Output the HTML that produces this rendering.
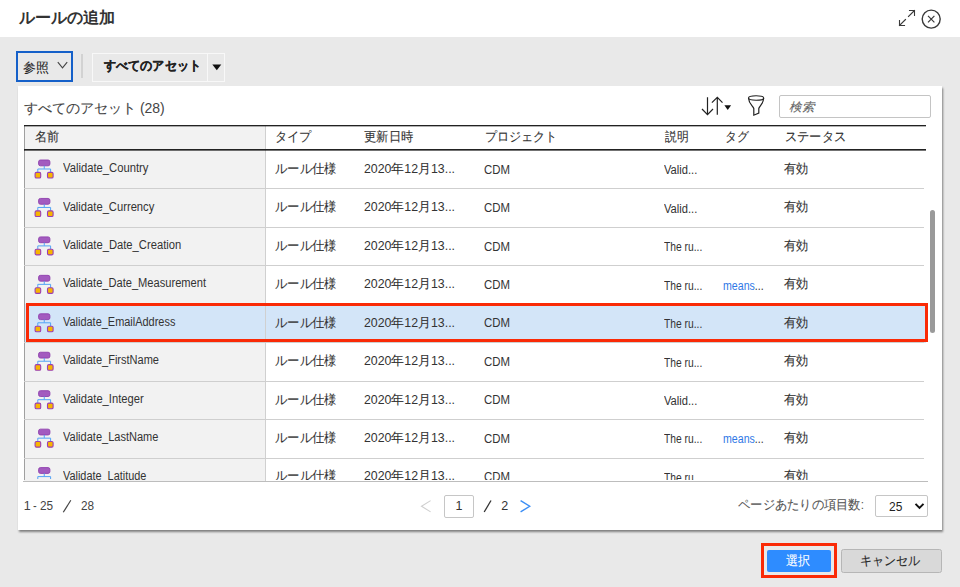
<!DOCTYPE html><html><head><meta charset="utf-8"><style>*{margin:0;padding:0;box-sizing:border-box}
html,body{width:960px;height:587px;overflow:hidden}
body{background:#e9e9e9;font-family:"Liberation Sans",sans-serif;position:relative}
.a{position:absolute}
.t{position:absolute;white-space:nowrap}
.clip{position:absolute;left:0;top:0;width:960px;height:480px;overflow:hidden}
.j{-webkit-text-stroke:0.1px currentColor}
</style></head><body>
<div class="a" style="left:0;top:0;width:960px;height:37px;background:#fff"></div>
<svg class="a" style="left:0;top:0" width="960" height="37">
  <g stroke="#3a3a3a" stroke-width="1.1" fill="none" stroke-linecap="square">
    <path d="M899.5 25.5 L905.5 19.5 M908.5 16.5 L914.5 10.5 M909.5 10.5 H914.5 V15.5 M899.5 20.5 V25.5 H904.5"/>
    <circle cx="931.2" cy="19.1" r="9" stroke-width="1.4"/>
    <path d="M928 15.9 L934.4 22.3 M934.4 15.9 L928 22.3" stroke-width="1.2" stroke-linecap="butt"/>
  </g>
</svg>
<!-- toolbar -->
<div class="a" style="left:16px;top:51px;width:57px;height:31px;border:2px solid #1560c9"></div>
<svg class="a" style="left:0;top:40px" width="240" height="45">
  <path d="M57.8 22.2 L62.5 27.8 L67.2 22.2" stroke="#444" stroke-width="1.1" fill="none"/>
  <path d="M212.3 24.5 H221.3 L216.8 30.3 Z" fill="#111"/>
</svg>
<div class="a" style="left:81px;top:54px;width:1.5px;height:24px;background:#d2d2d2"></div>
<div class="a" style="left:92px;top:53px;width:133px;height:29px;border:1px solid #f8f8f8"></div>
<div class="a" style="left:207px;top:54px;width:1px;height:27px;background:#f8f8f8"></div>
<!-- panel -->
<div class="a" style="left:18px;top:86px;width:924px;height:444px;background:#fff;box-shadow:1px 1.5px 2px rgba(0,0,0,.45)"></div>
<svg class="a" style="left:690px;top:85px" width="100" height="40">
  <g stroke="#222" stroke-width="1.2" fill="none">
    <path d="M17.5 12.3 V29.7 M12 24 L17.5 29.7 L23 24"/>
    <path d="M27.3 12.3 V29.7 M21.9 17.7 L27.3 12.3 L32.5 17.7"/>
    <ellipse cx="66.1" cy="13" rx="7.6" ry="2.2" stroke-width="1.1"/>
    <path d="M58.5 13 C58.8 19 63 21 63.8 23.5 V30.2 L68.8 28 V23.5 C69.6 21 73.4 19 73.7 13"/>
  </g>
  <path d="M34.4 20.3 H41.1 L37.75 25 Z" fill="#111"/>
</svg>
<div class="a" style="left:778.5px;top:95px;width:152px;height:22.5px;border:1px solid #c4c4c4;border-radius:2px"></div>
<!-- table -->
<div class="a" style="left:24px;top:125px;width:241px;height:356px;background:#f2f2f2"></div>
<div class="a" style="left:24px;top:304px;width:902px;height:38.5px;background:#d3e5f8"></div>
<div class="a" style="left:24px;top:125px;width:1px;height:355px;background:#a0a0a0"></div>
<div class="a" style="left:265px;top:125px;width:1px;height:356px;background:#d0d0d0"></div>
<div class="a" style="left:24px;top:125px;width:902px;height:1px;background:#222;box-shadow:0 1px 0 rgba(0,0,0,.3)"></div>
<div class="a" style="left:24px;top:149px;width:902px;height:1px;background:#222;box-shadow:0 1px 0 rgba(0,0,0,.55)"></div>
<div class="a" style="left:24px;top:188px;width:900px;height:1px;background:#cfcfcf"></div>
<div class="a" style="left:24px;top:226.5px;width:900px;height:1px;background:#cfcfcf"></div>
<div class="a" style="left:24px;top:265px;width:900px;height:1px;background:#cfcfcf"></div>
<div class="a" style="left:24px;top:342px;width:900px;height:1px;background:#cfcfcf"></div>
<div class="a" style="left:24px;top:380.5px;width:900px;height:1px;background:#cfcfcf"></div>
<div class="a" style="left:24px;top:419px;width:900px;height:1px;background:#cfcfcf"></div>
<div class="a" style="left:24px;top:457.5px;width:900px;height:1px;background:#cfcfcf"></div>
<div class="a" style="left:23px;top:481px;width:905px;height:1px;background:#bdbdbd"></div>
<div class="a" style="left:25.5px;top:303px;width:902.2px;height:38.6px;border:3px solid #fa2a06"></div>
<div class="a" style="left:929.6px;top:210px;width:5px;height:123px;background:#9a9a9a;border-radius:3px"></div>
<svg class="a" style="left:0;top:0" width="960" height="479"><g transform="translate(0 157.80)">
<rect x="38.6" y="2.2" width="11.3" height="5.8" rx="1.8" fill="#a35bbf" stroke="#8e3fae" stroke-width="0.9"/>
<path d="M44.25 8 V11 M37.8 14.5 V11.2 H50.6 V14.5" stroke="#52a3f5" stroke-width="1" fill="none"/>
<rect x="35.1" y="14.6" width="5.6" height="5.6" rx="1.3" fill="#f7b500" stroke="#9b3fb4" stroke-width="1.1"/>
<rect x="47.5" y="14.6" width="5.6" height="5.6" rx="1.3" fill="#f7b500" stroke="#9b3fb4" stroke-width="1.1"/>
</g>
<g transform="translate(0 196.25)">
<rect x="38.6" y="2.2" width="11.3" height="5.8" rx="1.8" fill="#a35bbf" stroke="#8e3fae" stroke-width="0.9"/>
<path d="M44.25 8 V11 M37.8 14.5 V11.2 H50.6 V14.5" stroke="#52a3f5" stroke-width="1" fill="none"/>
<rect x="35.1" y="14.6" width="5.6" height="5.6" rx="1.3" fill="#f7b500" stroke="#9b3fb4" stroke-width="1.1"/>
<rect x="47.5" y="14.6" width="5.6" height="5.6" rx="1.3" fill="#f7b500" stroke="#9b3fb4" stroke-width="1.1"/>
</g>
<g transform="translate(0 234.70)">
<rect x="38.6" y="2.2" width="11.3" height="5.8" rx="1.8" fill="#a35bbf" stroke="#8e3fae" stroke-width="0.9"/>
<path d="M44.25 8 V11 M37.8 14.5 V11.2 H50.6 V14.5" stroke="#52a3f5" stroke-width="1" fill="none"/>
<rect x="35.1" y="14.6" width="5.6" height="5.6" rx="1.3" fill="#f7b500" stroke="#9b3fb4" stroke-width="1.1"/>
<rect x="47.5" y="14.6" width="5.6" height="5.6" rx="1.3" fill="#f7b500" stroke="#9b3fb4" stroke-width="1.1"/>
</g>
<g transform="translate(0 273.15)">
<rect x="38.6" y="2.2" width="11.3" height="5.8" rx="1.8" fill="#a35bbf" stroke="#8e3fae" stroke-width="0.9"/>
<path d="M44.25 8 V11 M37.8 14.5 V11.2 H50.6 V14.5" stroke="#52a3f5" stroke-width="1" fill="none"/>
<rect x="35.1" y="14.6" width="5.6" height="5.6" rx="1.3" fill="#f7b500" stroke="#9b3fb4" stroke-width="1.1"/>
<rect x="47.5" y="14.6" width="5.6" height="5.6" rx="1.3" fill="#f7b500" stroke="#9b3fb4" stroke-width="1.1"/>
</g>
<g transform="translate(0 311.60)">
<rect x="38.6" y="2.2" width="11.3" height="5.8" rx="1.8" fill="#a35bbf" stroke="#8e3fae" stroke-width="0.9"/>
<path d="M44.25 8 V11 M37.8 14.5 V11.2 H50.6 V14.5" stroke="#52a3f5" stroke-width="1" fill="none"/>
<rect x="35.1" y="14.6" width="5.6" height="5.6" rx="1.3" fill="#f7b500" stroke="#9b3fb4" stroke-width="1.1"/>
<rect x="47.5" y="14.6" width="5.6" height="5.6" rx="1.3" fill="#f7b500" stroke="#9b3fb4" stroke-width="1.1"/>
</g>
<g transform="translate(0 350.05)">
<rect x="38.6" y="2.2" width="11.3" height="5.8" rx="1.8" fill="#a35bbf" stroke="#8e3fae" stroke-width="0.9"/>
<path d="M44.25 8 V11 M37.8 14.5 V11.2 H50.6 V14.5" stroke="#52a3f5" stroke-width="1" fill="none"/>
<rect x="35.1" y="14.6" width="5.6" height="5.6" rx="1.3" fill="#f7b500" stroke="#9b3fb4" stroke-width="1.1"/>
<rect x="47.5" y="14.6" width="5.6" height="5.6" rx="1.3" fill="#f7b500" stroke="#9b3fb4" stroke-width="1.1"/>
</g>
<g transform="translate(0 388.50)">
<rect x="38.6" y="2.2" width="11.3" height="5.8" rx="1.8" fill="#a35bbf" stroke="#8e3fae" stroke-width="0.9"/>
<path d="M44.25 8 V11 M37.8 14.5 V11.2 H50.6 V14.5" stroke="#52a3f5" stroke-width="1" fill="none"/>
<rect x="35.1" y="14.6" width="5.6" height="5.6" rx="1.3" fill="#f7b500" stroke="#9b3fb4" stroke-width="1.1"/>
<rect x="47.5" y="14.6" width="5.6" height="5.6" rx="1.3" fill="#f7b500" stroke="#9b3fb4" stroke-width="1.1"/>
</g>
<g transform="translate(0 426.95)">
<rect x="38.6" y="2.2" width="11.3" height="5.8" rx="1.8" fill="#a35bbf" stroke="#8e3fae" stroke-width="0.9"/>
<path d="M44.25 8 V11 M37.8 14.5 V11.2 H50.6 V14.5" stroke="#52a3f5" stroke-width="1" fill="none"/>
<rect x="35.1" y="14.6" width="5.6" height="5.6" rx="1.3" fill="#f7b500" stroke="#9b3fb4" stroke-width="1.1"/>
<rect x="47.5" y="14.6" width="5.6" height="5.6" rx="1.3" fill="#f7b500" stroke="#9b3fb4" stroke-width="1.1"/>
</g>
<g transform="translate(0 465.40)">
<rect x="38.6" y="2.2" width="11.3" height="5.8" rx="1.8" fill="#a35bbf" stroke="#8e3fae" stroke-width="0.9"/>
<path d="M44.25 8 V11 M37.8 14.5 V11.2 H50.6 V14.5" stroke="#52a3f5" stroke-width="1" fill="none"/>
<rect x="35.1" y="14.6" width="5.6" height="5.6" rx="1.3" fill="#f7b500" stroke="#9b3fb4" stroke-width="1.1"/>
<rect x="47.5" y="14.6" width="5.6" height="5.6" rx="1.3" fill="#f7b500" stroke="#9b3fb4" stroke-width="1.1"/>
</g></svg>
<!-- footer -->
<svg class="a" style="left:0;top:490px" width="120" height="30"><path d="M70.8 10.3 L63.3 22.3" stroke="#444" stroke-width="1.2" fill="none"/></svg>
<svg class="a" style="left:400px;top:490px" width="140" height="30">
  <path d="M30.6 10.6 L21.5 16.25 L30.6 21.9" stroke="#cfcfcf" stroke-width="1.1" fill="none"/>
  <path d="M91 10.5 L84.2 22" stroke="#333" stroke-width="1.3" fill="none"/>
  <path d="M120.6 10.6 L129.7 16.25 L120.6 21.9" stroke="#3b8ef5" stroke-width="1.4" fill="none"/>
</svg>
<div class="a" style="left:443.5px;top:494.75px;width:30.25px;height:22.75px;border:1px solid #c6c6c6;border-radius:2px"></div>
<div class="a" style="left:874.5px;top:495.2px;width:53.3px;height:22.3px;border:1px solid #c6c6c6;border-radius:2px"></div>
<svg class="a" style="left:900px;top:490px" width="40" height="30">
  <path d="M15.5 13.9 L19.5 17.9 L23.5 13.9" stroke="#111" stroke-width="2" fill="none"/>
</svg>
<div class="a" style="left:761.4px;top:542.7px;width:76px;height:35.6px;border:3px solid #fa2a06"></div>
<div class="a" style="left:766.8px;top:549.7px;width:64.2px;height:22.5px;background:#2e8cff;border-radius:2px"></div>
<div class="a" style="left:840.8px;top:549.2px;width:101.3px;height:23.4px;background:#d9d9d9;border:1.5px solid #b6b6b6;border-radius:2.5px"></div>

<div class="clip"><div id="t12" class="t" style="left:63.3px;top:162.10px;font-size:12px;line-height:12px;font-weight:normal;color:#333;font-style:normal;transform:scaleX(0.9367);transform-origin:0 50%;">Validate_Country</div><div id="t13" class="t" style="left:275px;top:162.85px;font-size:12.5px;line-height:12.5px;font-weight:normal;color:#333;font-style:normal;transform:scaleX(0.9492);transform-origin:0 50%;"><span class="j">ルール仕様</span></div><div id="t14" class="t" style="left:364px;top:162.85px;font-size:12.5px;line-height:12.5px;font-weight:normal;color:#333;font-style:normal;transform:scaleX(0.9886);transform-origin:0 50%;">2020<span class="j">年</span>12<span class="j">月</span>13...</div><div id="t15" class="t" style="left:484px;top:163.60px;font-size:12px;line-height:12px;font-weight:normal;color:#333;font-style:normal;transform:scaleX(0.9514);transform-origin:0 50%;">CDM</div><div id="t16" class="t" style="left:664px;top:164.30px;font-size:12px;line-height:12px;font-weight:normal;color:#333;font-style:normal;transform:scaleX(0.9302);transform-origin:0 50%;">Valid...</div><div id="t17" class="t" style="left:784px;top:162.85px;font-size:12.5px;line-height:12.5px;font-weight:normal;color:#333;font-style:normal;transform:scaleX(0.9346);transform-origin:0 50%;"><span class="j">有効</span></div><div id="t18" class="t" style="left:63.3px;top:200.55px;font-size:12px;line-height:12px;font-weight:normal;color:#333;font-style:normal;transform:scaleX(0.9333);transform-origin:0 50%;">Validate_Currency</div><div id="t19" class="t" style="left:275px;top:201.30px;font-size:12.5px;line-height:12.5px;font-weight:normal;color:#333;font-style:normal;transform:scaleX(0.9492);transform-origin:0 50%;"><span class="j">ルール仕様</span></div><div id="t20" class="t" style="left:364px;top:201.30px;font-size:12.5px;line-height:12.5px;font-weight:normal;color:#333;font-style:normal;transform:scaleX(0.9886);transform-origin:0 50%;">2020<span class="j">年</span>12<span class="j">月</span>13...</div><div id="t21" class="t" style="left:484px;top:202.05px;font-size:12px;line-height:12px;font-weight:normal;color:#333;font-style:normal;transform:scaleX(0.9514);transform-origin:0 50%;">CDM</div><div id="t22" class="t" style="left:664px;top:202.75px;font-size:12px;line-height:12px;font-weight:normal;color:#333;font-style:normal;transform:scaleX(0.9302);transform-origin:0 50%;">Valid...</div><div id="t23" class="t" style="left:784px;top:201.30px;font-size:12.5px;line-height:12.5px;font-weight:normal;color:#333;font-style:normal;transform:scaleX(0.9346);transform-origin:0 50%;"><span class="j">有効</span></div><div id="t24" class="t" style="left:63.3px;top:239.00px;font-size:12px;line-height:12px;font-weight:normal;color:#333;font-style:normal;transform:scaleX(0.9342);transform-origin:0 50%;">Validate_Date_Creation</div><div id="t25" class="t" style="left:275px;top:239.75px;font-size:12.5px;line-height:12.5px;font-weight:normal;color:#333;font-style:normal;transform:scaleX(0.9492);transform-origin:0 50%;"><span class="j">ルール仕様</span></div><div id="t26" class="t" style="left:364px;top:239.75px;font-size:12.5px;line-height:12.5px;font-weight:normal;color:#333;font-style:normal;transform:scaleX(0.9886);transform-origin:0 50%;">2020<span class="j">年</span>12<span class="j">月</span>13...</div><div id="t27" class="t" style="left:484px;top:240.50px;font-size:12px;line-height:12px;font-weight:normal;color:#333;font-style:normal;transform:scaleX(0.9514);transform-origin:0 50%;">CDM</div><div id="t28" class="t" style="left:664px;top:241.20px;font-size:12px;line-height:12px;font-weight:normal;color:#333;font-style:normal;transform:scaleX(0.8571);transform-origin:0 50%;">The ru...</div><div id="t29" class="t" style="left:784px;top:239.75px;font-size:12.5px;line-height:12.5px;font-weight:normal;color:#333;font-style:normal;transform:scaleX(0.9346);transform-origin:0 50%;"><span class="j">有効</span></div><div id="t30" class="t" style="left:63.3px;top:277.45px;font-size:12px;line-height:12px;font-weight:normal;color:#333;font-style:normal;transform:scaleX(0.9253);transform-origin:0 50%;">Validate_Date_Measurement</div><div id="t31" class="t" style="left:275px;top:278.20px;font-size:12.5px;line-height:12.5px;font-weight:normal;color:#333;font-style:normal;transform:scaleX(0.9492);transform-origin:0 50%;"><span class="j">ルール仕様</span></div><div id="t32" class="t" style="left:364px;top:278.20px;font-size:12.5px;line-height:12.5px;font-weight:normal;color:#333;font-style:normal;transform:scaleX(0.9886);transform-origin:0 50%;">2020<span class="j">年</span>12<span class="j">月</span>13...</div><div id="t33" class="t" style="left:484px;top:278.95px;font-size:12px;line-height:12px;font-weight:normal;color:#333;font-style:normal;transform:scaleX(0.9514);transform-origin:0 50%;">CDM</div><div id="t34" class="t" style="left:664px;top:279.65px;font-size:12px;line-height:12px;font-weight:normal;color:#333;font-style:normal;transform:scaleX(0.8571);transform-origin:0 50%;">The ru...</div><div id="t35" class="t" style="left:723.3px;top:279.65px;font-size:12px;line-height:12px;font-weight:normal;color:#333;font-style:normal;transform:scaleX(0.8839);transform-origin:0 50%;"><span style="color:#2f78e6">means</span>...</div><div id="t36" class="t" style="left:784px;top:278.20px;font-size:12.5px;line-height:12.5px;font-weight:normal;color:#333;font-style:normal;transform:scaleX(0.9346);transform-origin:0 50%;"><span class="j">有効</span></div><div id="t37" class="t" style="left:63.3px;top:315.90px;font-size:12px;line-height:12px;font-weight:normal;color:#333;font-style:normal;transform:scaleX(0.9124);transform-origin:0 50%;">Validate_EmailAddress</div><div id="t38" class="t" style="left:275px;top:316.65px;font-size:12.5px;line-height:12.5px;font-weight:normal;color:#333;font-style:normal;transform:scaleX(0.9492);transform-origin:0 50%;"><span class="j">ルール仕様</span></div><div id="t39" class="t" style="left:364px;top:316.65px;font-size:12.5px;line-height:12.5px;font-weight:normal;color:#333;font-style:normal;transform:scaleX(0.9886);transform-origin:0 50%;">2020<span class="j">年</span>12<span class="j">月</span>13...</div><div id="t40" class="t" style="left:484px;top:317.40px;font-size:12px;line-height:12px;font-weight:normal;color:#333;font-style:normal;transform:scaleX(0.9514);transform-origin:0 50%;">CDM</div><div id="t41" class="t" style="left:664px;top:318.10px;font-size:12px;line-height:12px;font-weight:normal;color:#333;font-style:normal;transform:scaleX(0.8571);transform-origin:0 50%;">The ru...</div><div id="t42" class="t" style="left:784px;top:316.65px;font-size:12.5px;line-height:12.5px;font-weight:normal;color:#333;font-style:normal;transform:scaleX(0.9346);transform-origin:0 50%;"><span class="j">有効</span></div><div id="t43" class="t" style="left:63.3px;top:354.35px;font-size:12px;line-height:12px;font-weight:normal;color:#333;font-style:normal;transform:scaleX(0.9188);transform-origin:0 50%;">Validate_FirstName</div><div id="t44" class="t" style="left:275px;top:355.10px;font-size:12.5px;line-height:12.5px;font-weight:normal;color:#333;font-style:normal;transform:scaleX(0.9492);transform-origin:0 50%;"><span class="j">ルール仕様</span></div><div id="t45" class="t" style="left:364px;top:355.10px;font-size:12.5px;line-height:12.5px;font-weight:normal;color:#333;font-style:normal;transform:scaleX(0.9886);transform-origin:0 50%;">2020<span class="j">年</span>12<span class="j">月</span>13...</div><div id="t46" class="t" style="left:484px;top:355.85px;font-size:12px;line-height:12px;font-weight:normal;color:#333;font-style:normal;transform:scaleX(0.9514);transform-origin:0 50%;">CDM</div><div id="t47" class="t" style="left:664px;top:356.55px;font-size:12px;line-height:12px;font-weight:normal;color:#333;font-style:normal;transform:scaleX(0.8571);transform-origin:0 50%;">The ru...</div><div id="t48" class="t" style="left:784px;top:355.10px;font-size:12.5px;line-height:12.5px;font-weight:normal;color:#333;font-style:normal;transform:scaleX(0.9346);transform-origin:0 50%;"><span class="j">有効</span></div><div id="t49" class="t" style="left:63.3px;top:392.80px;font-size:12px;line-height:12px;font-weight:normal;color:#333;font-style:normal;transform:scaleX(0.9328);transform-origin:0 50%;">Validate_Integer</div><div id="t50" class="t" style="left:275px;top:393.55px;font-size:12.5px;line-height:12.5px;font-weight:normal;color:#333;font-style:normal;transform:scaleX(0.9492);transform-origin:0 50%;"><span class="j">ルール仕様</span></div><div id="t51" class="t" style="left:364px;top:393.55px;font-size:12.5px;line-height:12.5px;font-weight:normal;color:#333;font-style:normal;transform:scaleX(0.9886);transform-origin:0 50%;">2020<span class="j">年</span>12<span class="j">月</span>13...</div><div id="t52" class="t" style="left:484px;top:394.30px;font-size:12px;line-height:12px;font-weight:normal;color:#333;font-style:normal;transform:scaleX(0.9514);transform-origin:0 50%;">CDM</div><div id="t53" class="t" style="left:664px;top:395.00px;font-size:12px;line-height:12px;font-weight:normal;color:#333;font-style:normal;transform:scaleX(0.9302);transform-origin:0 50%;">Valid...</div><div id="t54" class="t" style="left:784px;top:393.55px;font-size:12.5px;line-height:12.5px;font-weight:normal;color:#333;font-style:normal;transform:scaleX(0.9346);transform-origin:0 50%;"><span class="j">有効</span></div><div id="t55" class="t" style="left:63.3px;top:431.25px;font-size:12px;line-height:12px;font-weight:normal;color:#333;font-style:normal;transform:scaleX(0.9187);transform-origin:0 50%;">Validate_LastName</div><div id="t56" class="t" style="left:275px;top:432.00px;font-size:12.5px;line-height:12.5px;font-weight:normal;color:#333;font-style:normal;transform:scaleX(0.9492);transform-origin:0 50%;"><span class="j">ルール仕様</span></div><div id="t57" class="t" style="left:364px;top:432.00px;font-size:12.5px;line-height:12.5px;font-weight:normal;color:#333;font-style:normal;transform:scaleX(0.9886);transform-origin:0 50%;">2020<span class="j">年</span>12<span class="j">月</span>13...</div><div id="t58" class="t" style="left:484px;top:432.75px;font-size:12px;line-height:12px;font-weight:normal;color:#333;font-style:normal;transform:scaleX(0.9514);transform-origin:0 50%;">CDM</div><div id="t59" class="t" style="left:664px;top:433.45px;font-size:12px;line-height:12px;font-weight:normal;color:#333;font-style:normal;transform:scaleX(0.8571);transform-origin:0 50%;">The ru...</div><div id="t60" class="t" style="left:723.3px;top:433.45px;font-size:12px;line-height:12px;font-weight:normal;color:#333;font-style:normal;transform:scaleX(0.8839);transform-origin:0 50%;"><span style="color:#2f78e6">means</span>...</div><div id="t61" class="t" style="left:784px;top:432.00px;font-size:12.5px;line-height:12.5px;font-weight:normal;color:#333;font-style:normal;transform:scaleX(0.9346);transform-origin:0 50%;"><span class="j">有効</span></div><div id="t62" class="t" style="left:63.3px;top:469.70px;font-size:12px;line-height:12px;font-weight:normal;color:#333;font-style:normal;transform:scaleX(0.9079);transform-origin:0 50%;">Validate_Latitude</div><div id="t63" class="t" style="left:275px;top:470.45px;font-size:12.5px;line-height:12.5px;font-weight:normal;color:#333;font-style:normal;transform:scaleX(0.9492);transform-origin:0 50%;"><span class="j">ルール仕様</span></div><div id="t64" class="t" style="left:364px;top:470.45px;font-size:12.5px;line-height:12.5px;font-weight:normal;color:#333;font-style:normal;transform:scaleX(0.9886);transform-origin:0 50%;">2020<span class="j">年</span>12<span class="j">月</span>13...</div><div id="t65" class="t" style="left:484px;top:471.20px;font-size:12px;line-height:12px;font-weight:normal;color:#333;font-style:normal;transform:scaleX(0.9514);transform-origin:0 50%;">CDM</div><div id="t66" class="t" style="left:664px;top:471.90px;font-size:12px;line-height:12px;font-weight:normal;color:#333;font-style:normal;transform:scaleX(0.8571);transform-origin:0 50%;">The ru...</div><div id="t67" class="t" style="left:784px;top:470.45px;font-size:12.5px;line-height:12.5px;font-weight:normal;color:#333;font-style:normal;transform:scaleX(0.9346);transform-origin:0 50%;"><span class="j">有効</span></div></div>
<div id="t0" class="t" style="left:18.75px;top:9.60px;font-size:16px;line-height:16px;font-weight:bold;color:#333;font-style:normal;transform:scaleX(1.0052);transform-origin:0 50%;">ルールの追加</div><div id="t1" class="t" style="left:22.5px;top:61.20px;font-size:13px;line-height:13px;font-weight:normal;color:#222;font-style:normal;transform:scaleX(0.9923);transform-origin:0 50%;"><span class="j">参照</span></div><div id="t2" class="t" style="left:103.75px;top:60.15px;font-size:12.5px;line-height:12.5px;font-weight:bold;color:#222;font-style:normal;transform:scaleX(0.9312);transform-origin:0 50%;-webkit-text-stroke:0.2px #222;">すべてのアセット</div><div id="t3" class="t" style="left:24px;top:100.80px;font-size:14px;line-height:14px;font-weight:normal;color:#444;font-style:normal;"><span class="j">すべてのアセット</span> (28)</div><div id="t4" class="t" style="left:789px;top:100.50px;font-size:12px;line-height:12px;font-weight:normal;color:#666;font-style:italic;transform:scaleX(1.0417);transform-origin:0 50%;"><span class="j">検索</span></div><div id="t5" class="t" style="left:35px;top:130.75px;font-size:12.5px;line-height:12.5px;font-weight:normal;color:#333;font-style:normal;transform:scaleX(0.9346);transform-origin:0 50%;"><span class="j">名前</span></div><div id="t6" class="t" style="left:275px;top:130.75px;font-size:12.5px;line-height:12.5px;font-weight:normal;color:#333;font-style:normal;transform:scaleX(0.9410);transform-origin:0 50%;"><span class="j">タイプ</span></div><div id="t7" class="t" style="left:364px;top:130.75px;font-size:12.5px;line-height:12.5px;font-weight:normal;color:#333;font-style:normal;transform:scaleX(0.9481);transform-origin:0 50%;"><span class="j">更新日時</span></div><div id="t8" class="t" style="left:485px;top:130.75px;font-size:12.5px;line-height:12.5px;font-weight:normal;color:#333;font-style:normal;transform:scaleX(0.9269);transform-origin:0 50%;"><span class="j">プロジェクト</span></div><div id="t9" class="t" style="left:664.9px;top:130.75px;font-size:12.5px;line-height:12.5px;font-weight:normal;color:#333;font-style:normal;transform:scaleX(0.9077);transform-origin:0 50%;"><span class="j">説明</span></div><div id="t10" class="t" style="left:724.5px;top:130.75px;font-size:12.5px;line-height:12.5px;font-weight:normal;color:#333;font-style:normal;transform:scaleX(0.9115);transform-origin:0 50%;"><span class="j">タグ</span></div><div id="t11" class="t" style="left:784.9px;top:130.75px;font-size:12.5px;line-height:12.5px;font-weight:normal;color:#333;font-style:normal;transform:scaleX(0.9415);transform-origin:0 50%;"><span class="j">ステータス</span></div><div id="t68" class="t" style="left:23.8px;top:499.75px;font-size:12.5px;line-height:12.5px;font-weight:normal;color:#444;font-style:normal;">1</div><div id="t69" class="t" style="left:33.3px;top:499.75px;font-size:12.5px;line-height:12.5px;font-weight:normal;color:#444;font-style:normal;transform:scaleX(0.8869);transform-origin:0 50%;">-</div><div id="t70" class="t" style="left:40px;top:499.75px;font-size:12.5px;line-height:12.5px;font-weight:normal;color:#444;font-style:normal;transform:scaleX(0.9420);transform-origin:0 50%;">25</div><div id="t71" class="t" style="left:80.6px;top:499.75px;font-size:12.5px;line-height:12.5px;font-weight:normal;color:#444;font-style:normal;transform:scaleX(0.9420);transform-origin:0 50%;">28</div><div id="t72" class="t" style="left:455.6px;top:500.25px;font-size:12.5px;line-height:12.5px;font-weight:normal;color:#333;font-style:normal;">1</div><div id="t73" class="t" style="left:501.25px;top:500.25px;font-size:12.5px;line-height:12.5px;font-weight:normal;color:#333;font-style:normal;">2</div><div id="t74" class="t" style="left:738px;top:498.75px;font-size:12.5px;line-height:12.5px;font-weight:normal;color:#555;font-style:normal;transform:scaleX(0.9439);transform-origin:0 50%;"><span class="j">ページあたりの項目数</span>:</div><div id="t75" class="t" style="left:889px;top:499.50px;font-size:13px;line-height:13px;font-weight:normal;color:#222;font-style:normal;transform:scaleX(0.9192);transform-origin:0 50%;">25</div><div id="t76" class="t" style="left:786px;top:555.25px;font-size:12.5px;line-height:12.5px;font-weight:normal;color:#fff;font-style:normal;transform:scaleX(0.9308);transform-origin:0 50%;-webkit-text-stroke:0.3px #fff;"><span class="j">選択</span></div><div id="t77" class="t" style="left:859.8px;top:555.25px;font-size:12.5px;line-height:12.5px;font-weight:normal;color:#2a2a2a;font-style:normal;transform:scaleX(0.9262);transform-origin:0 50%;"><span class="j">キャンセル</span></div>
</body></html>
